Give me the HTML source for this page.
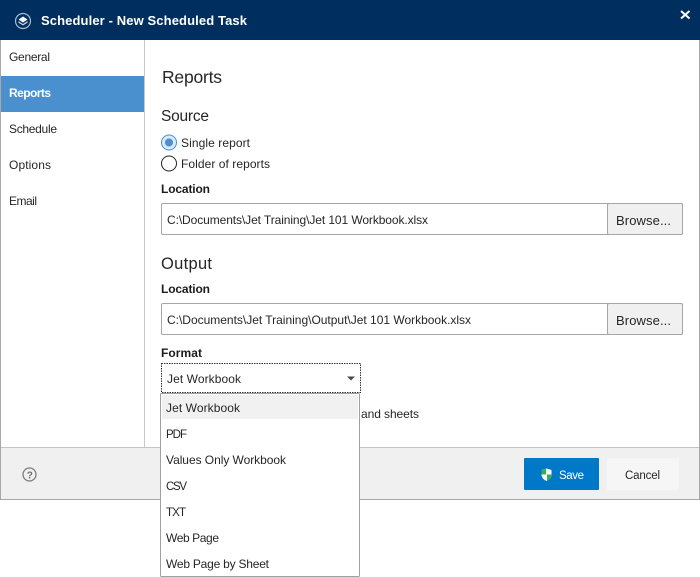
<!DOCTYPE html>
<html><head><meta charset="utf-8"><style>
html,body{margin:0;padding:0;background:#fff;width:700px;height:577px;overflow:hidden}
svg{display:block}
text{font-family:"Liberation Sans",sans-serif;font-size:12px;fill:#262626}
.b{font-weight:bold;fill:#1c1c1c}
.s{font-size:11.500px}
</style></head><body>
<svg width="700" height="577" viewBox="0 0 700 577" xmlns="http://www.w3.org/2000/svg">
<rect x="0.5" y="30" width="699" height="469.500" fill="#fff" stroke="#a8a8a8"/>
<rect x="0" y="0" width="700" height="40" fill="#002f5f"/>
<rect x="144" y="40" width="1" height="407" fill="#c8c8c8"/>
<rect x="1" y="76" width="143" height="36" fill="#4a8fce"/>
<rect x="1" y="447" width="698" height="52" fill="#f0f0f0"/>
<rect x="1" y="447" width="698" height="1" fill="#c4c4c4"/>

<circle cx="23" cy="21" r="7.500" fill="none" stroke="#a9bccf" stroke-width="1.200"/>
<path d="M23 16.500L27.500 19.500L23 22.500L18.500 19.500Z" fill="#fff"/>
<path d="M18.500 21L23 24L27.500 21L27.500 22.800L23 25.500L18.500 22.800Z" fill="#c3cfdb"/>
<text x="41" y="25" class="b" style="font-size:13px;fill:#fff" textLength="206">Scheduler - New Scheduled Task</text>
<path d="M681 11L689.500 18.500M689.500 11L681 18.500" stroke="#fff" stroke-width="2"/>

<text x="9" y="61" textLength="41">General</text>
<text x="9" y="97" textLength="42" style="fill:#fff;font-weight:bold">Reports</text>
<text x="9" y="133" textLength="48">Schedule</text>
<text x="9" y="169" textLength="42">Options</text>
<text x="9" y="205" textLength="28">Email</text>

<text x="162" y="83" textLength="60" style="font-size:17.500px">Reports</text>
<text x="161" y="121" textLength="48" style="font-size:15.500px">Source</text>
<circle cx="169" cy="142.500" r="7.500" fill="#dbe9f6" stroke="#4a8fce"/>
<circle cx="169" cy="142.500" r="4" fill="#4a8fce"/>
<text x="181" y="147" textLength="69">Single report</text>
<circle cx="169" cy="163.500" r="7.500" fill="#fff" stroke="#222"/>
<text x="181" y="168" textLength="89">Folder of reports</text>
<text x="161" y="193" class="b" textLength="49">Location</text>

<rect x="161.500" y="203.500" width="521" height="31" rx="1.500" fill="#fff" stroke="#a5a5a5"/>
<rect x="607.500" y="203.500" width="75" height="31" rx="1.500" fill="#f0f0f0" stroke="#a5a5a5"/>
<text x="167" y="224" textLength="261">C:\Documents\Jet Training\Jet 101 Workbook.xlsx</text>
<text x="616" y="225" textLength="55" style="font-size:13px">Browse...</text>

<text x="161" y="269" textLength="51" style="font-size:16.500px">Output</text>
<text x="161" y="293" class="b" textLength="49">Location</text>
<rect x="161.500" y="303.500" width="521" height="31" rx="1.500" fill="#fff" stroke="#a5a5a5"/>
<rect x="607.500" y="303.500" width="75" height="31" rx="1.500" fill="#f0f0f0" stroke="#a5a5a5"/>
<text x="167" y="324" textLength="304">C:\Documents\Jet Training\Output\Jet 101 Workbook.xlsx</text>
<text x="616" y="325" textLength="55" style="font-size:13px">Browse...</text>

<text x="161" y="357" class="b" textLength="41">Format</text>
<rect x="161.500" y="363.500" width="199" height="29" fill="#fff" stroke="#333" stroke-dasharray="1.500 1"/>
<text x="167" y="383" textLength="74">Jet Workbook</text>
<path d="M347 376.500L355 376.500L351 380.500Z" fill="#4a4a4a"/>

<text x="361" y="418" textLength="58">and sheets</text>

<rect x="524" y="458" width="75" height="32" rx="1" fill="#0078c8"/>
<path d="M541.500 470L546.500 468.500L551.500 470L551.500 475C551.500 477.500 549 480 546.500 481C544 480 541.500 477.500 541.500 475Z" fill="#fff"/>
<path d="M541.500 470L546 468.700L546 474.500L541.500 474.500ZM547 474.500L551.500 474.500C551.500 477.500 549 480 547 480.800Z" fill="#35b04f"/>
<text x="559" y="479" textLength="25" class="s" style="fill:#fff">Save</text>
<rect x="607" y="458" width="72" height="32" fill="#f6f6f6"/>
<text x="625" y="479" textLength="35" class="s">Cancel</text>

<circle cx="29.500" cy="474.500" r="6.500" fill="none" stroke="#7d7d7d" stroke-width="1.300"/>
<text x="26.800" y="478.500" style="font-size:10px;font-weight:bold;fill:#6f6f6f">?</text>

<rect x="160.500" y="393.500" width="199" height="183" rx="1" fill="#fff" stroke="#a0a0a0"/>
<rect x="162" y="395" width="196" height="24" fill="#f1f1f1"/>
<text x="166" y="412" textLength="74">Jet Workbook</text>
<text x="166" y="438" textLength="21" class="s">PDF</text>
<text x="166" y="464" textLength="120">Values Only Workbook</text>
<text x="166" y="490" textLength="21" class="s">CSV</text>
<text x="166" y="516" textLength="20" class="s">TXT</text>
<text x="166" y="542" textLength="53">Web Page</text>
<text x="166" y="568" textLength="103">Web Page by Sheet</text>
</svg>
</body></html>
